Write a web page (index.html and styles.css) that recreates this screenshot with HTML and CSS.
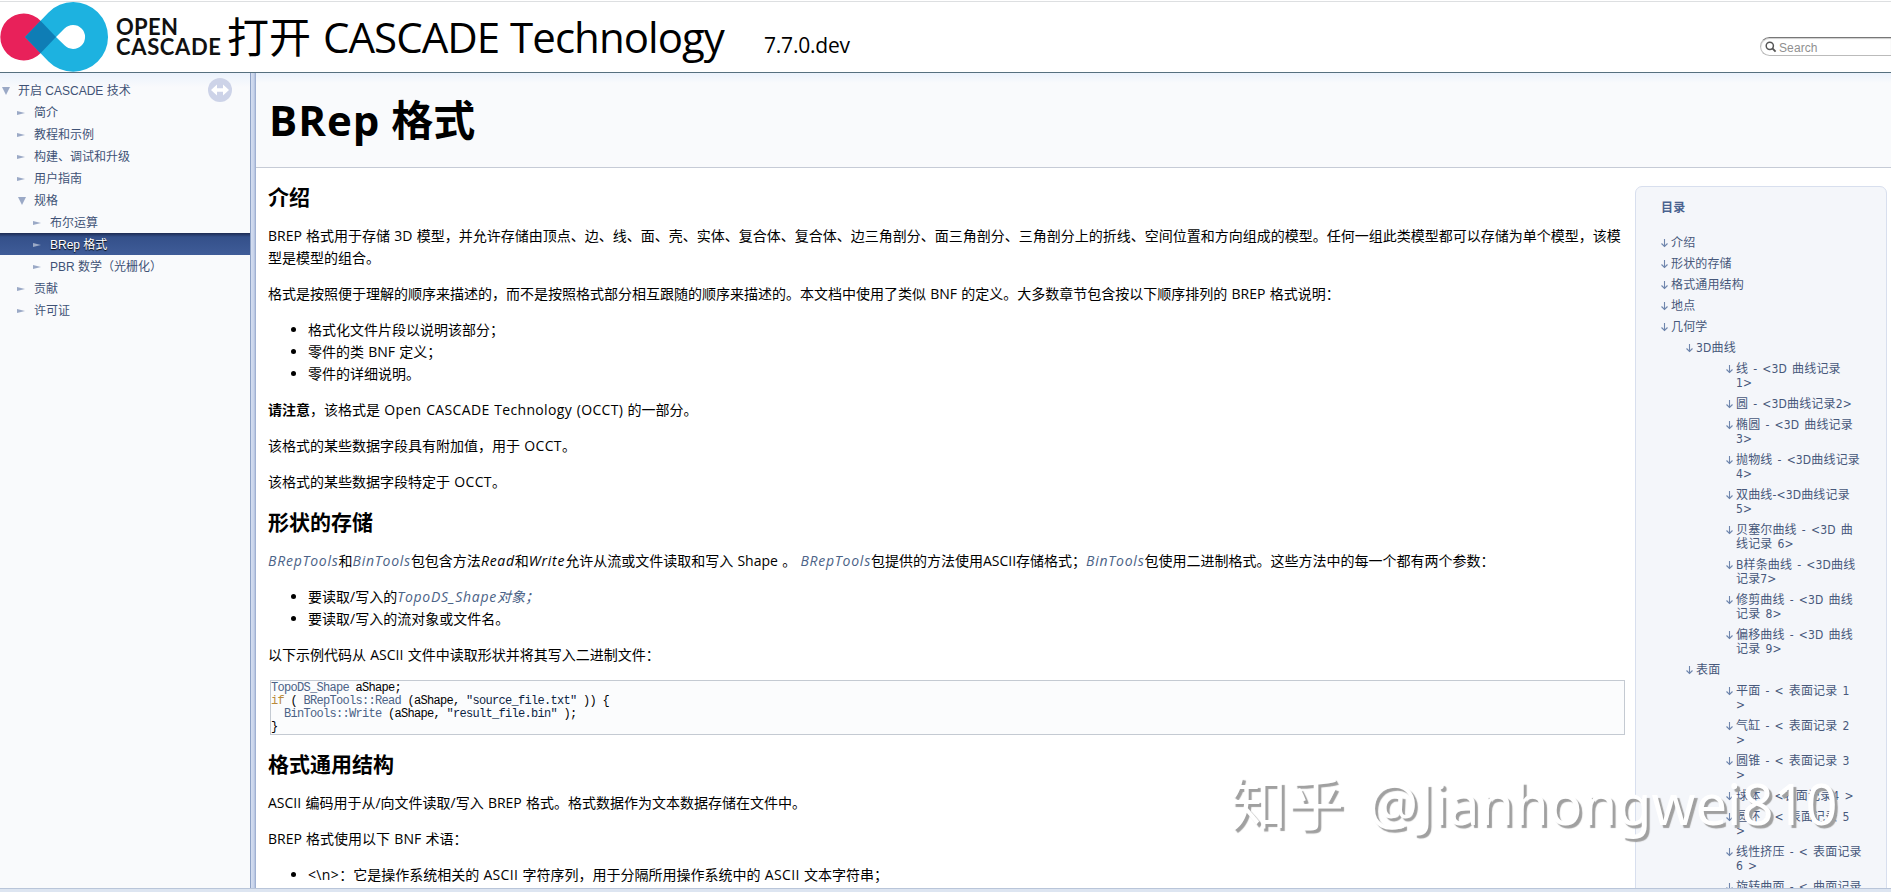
FILE: index.html
```html
<!DOCTYPE html>
<html lang="zh-CN">
<head>
<meta charset="UTF-8">
<title>Open CASCADE Technology: BRep 格式</title>
<link rel="stylesheet" href="styles.css">
</head>
<body>
<header id="top">
  <svg class="logo" width="222" height="72" viewBox="0 0 222 72">
    <path fill="#e8215a" d="M56 37 L40.5 53.3 A23.4 23.4 0 1 1 40.5 20.7 Z"/>
    <path fill="#1db2e0" fill-rule="evenodd" d="M25 37 L48.5 12.4 A34.8 34.8 0 1 1 48.5 61.4 Z M56 37 L64.5 45.3 A12 12 0 1 0 64.5 28.5 Z"/>
    <path fill="#0f7db5" d="M25 37 L40.5 20.7 L56 37 L40.5 53.3 Z"/>
    <text class="logo-text" x="116" y="34.5" textLength="62">OPEN</text>
    <text class="logo-text" x="116" y="55" textLength="105">CASCADE</text>
  </svg>
  <div class="project-name"><span class="cn">打开</span> <span class="en">CASCADE Technology</span></div>
  <div class="project-number">7.7.0.dev</div>
  <div class="search-box">
    <svg width="12" height="12" viewBox="0 0 12 12"><circle cx="4.8" cy="4.8" r="3.6" fill="none" stroke="#555" stroke-width="1.5"/><path d="M7.4 7.4L10.6 10.6" stroke="#555" stroke-width="1.9"/></svg>
    <span>Search</span>
  </div>
</header>

<div class="main">
  <nav id="nav-tree">
    <svg class="nav-sync" width="24" height="24" viewBox="0 0 24 24"><circle cx="12" cy="12" r="12" fill="#cdd3e8"/><path fill="#fff" d="M3 12L9 6.5V10.2H15V6.5L21 12L15 17.5V13.8H9V17.5Z"/></svg>
    <ul>
      <li class="open">开启 CASCADE 技术</li>
      <li class="l1">简介</li>
      <li class="l1">教程和示例</li>
      <li class="l1">构建、调试和升级</li>
      <li class="l1">用户指南</li>
      <li class="l1 open">规格</li>
      <li class="l2">布尔运算</li>
      <li class="l2 selected">BRep 格式</li>
      <li class="l2">PBR 数学（光栅化）</li>
      <li class="l1">贡献</li>
      <li class="l1">许可证</li>
    </ul>
  </nav>
  <div class="splitbar"></div>
  <div id="doc-content">
    <div class="header"><div class="title"><span>BRep</span> 格式</div></div>
    <div class="contents">
      <div class="textblock">
        <h1>介绍</h1>
        <p>BREP 格式用于存储 3D 模型，并允许存储由顶点、边、线、面、壳、实体、复合体、复合体、边三角剖分、面三角剖分、三角剖分上的折线、空间位置和方向组成的模型。任何一组此类模型都可以存储为单个模型，该模<br>型是模型的组合。</p>
        <p>格式是按照便于理解的顺序来描述的，而不是按照格式部分相互跟随的顺序来描述的。本文档中使用了类似 BNF 的定义。大多数章节包含按以下顺序排列的 BREP 格式说明：</p>
        <ul>
          <li>格式化文件片段以说明该部分；</li>
          <li>零件的类 BNF 定义；</li>
          <li>零件的详细说明。</li>
        </ul>
        <p><b>请注意</b>，该格式是 <span class="wide">Open CASCADE Technology (OCCT)</span> 的一部分。</p>
        <p>该格式的某些数据字段具有附加值，用于 <span class="wide">OCCT</span>。</p>
        <p>该格式的某些数据字段特定于 <span class="wide">OCCT</span>。</p>

        <h1>形状的存储</h1>
        <p><a><em>BRepTools</em></a>和<a><em>BinTools</em></a>包包含方法<em>Read</em>和<em>Write</em>允许从流或文件读取和写入 Shape 。 <a><em>BRepTools</em></a>包提供的方法使用ASCII存储格式；<a><em>BinTools</em></a>包使用二进制格式。这些方法中的每一个都有两个参数：</p>
        <ul>
          <li>要读取/写入的<a><em>TopoDS_Shape</em><i>对象；</i></a></li>
          <li>要读取/写入的流对象或文件名。</li>
        </ul>
        <p>以下示例代码从 ASCII 文件中读取形状并将其写入二进制文件：</p>
        <pre class="fragment"><a>TopoDS_Shape</a> aShape;
<span class="keyword">if</span> ( <a>BRepTools::Read</a> (aShape, <span class="string">"source_file.txt"</span> )) {
  <a>BinTools::Write</a> (aShape, <span class="string">"result_file.bin"</span> );
}</pre>

        <h1>格式通用结构</h1>
        <p>ASCII 编码用于从/向文件读取/写入 BREP 格式。格式数据作为文本数据存储在文件中。</p>
        <p>BREP 格式使用以下 BNF 术语：</p>
        <ul>
          <li><span class="wide">&lt;\n&gt;</span>：它是操作系统相关的 <span class="wide">ASCII</span> 字符序列，用于分隔所用操作系统中的 <span class="wide">ASCII</span> 文本字符串；</li>
        </ul>
      </div>

      <div class="toc">
        <h3>目录</h3>
        <ul>
          <li>介绍</li>
          <li>形状的存储</li>
          <li>格式通用结构</li>
          <li>地点</li>
          <li>几何学</li>
          <li class="level2">3D曲线</li>
          <li class="level3">线 - &lt;3D 曲线记录<br>1&gt;</li>
          <li class="level3">圆 - &lt;3D曲线记录2&gt;</li>
          <li class="level3">椭圆 - &lt;3D 曲线记录<br>3&gt;</li>
          <li class="level3">抛物线 - &lt;3D曲线记录<br>4&gt;</li>
          <li class="level3">双曲线-&lt;3D曲线记录<br>5&gt;</li>
          <li class="level3">贝塞尔曲线 - &lt;3D 曲<br>线记录 6&gt;</li>
          <li class="level3">B样条曲线 - &lt;3D曲线<br>记录7&gt;</li>
          <li class="level3">修剪曲线 - &lt;3D 曲线<br>记录 8&gt;</li>
          <li class="level3">偏移曲线 - &lt;3D 曲线<br>记录 9&gt;</li>
          <li class="level2">表面</li>
          <li class="level3">平面 - &lt; 表面记录 1<br>&gt;</li>
          <li class="level3">气缸 - &lt; 表面记录 2<br>&gt;</li>
          <li class="level3">圆锥 - &lt; 表面记录 3<br>&gt;</li>
          <li class="level3">球体 - &lt;表面记录4 &gt;</li>
          <li class="level3">圆环 - &lt; 表面记录 5<br>&gt;</li>
          <li class="level3">线性挤压 - &lt; 表面记录<br>6 &gt;</li>
          <li class="level3">旋转曲面 - &lt; 曲面记录</li>
        </ul>
      </div>
    </div>
  </div>
</div>
<footer></footer>
<div class="watermark">知乎 <span>@Jianhongwei810</span></div>
</body>
</html>
```
FILE: styles.css
```css
* {
  box-sizing: border-box;
}
body {
  margin: 0;
  width: 100vw;
  height: 100vh;
  overflow: hidden;
  display: flex;
  flex-direction: column;
  background: #fff;
  color: #000;
  font: 400 14px/22px "Open Sans", "Noto Sans CJK SC", sans-serif;
}
ul {
  margin: 0;
  padding: 0;
}

/* top area */
#top {
  flex: none;
  display: flex;
  height: 73px;
  border-bottom: 1px solid #56707f;
  background: linear-gradient(#fff 1px, #dddfe1 1px, #dddfe1 2px, #fff 2px);
}
.logo {
  flex: none;
}
.logo-text {
  font: 700 22px Lato, sans-serif;
  fill: #111;
}
.project-name {
  margin-left: 5px;
  font-size: 42px;
  line-height: 74px;
  white-space: nowrap;
  word-spacing: 1px;
}
.project-name .en {
  letter-spacing: -0.95px;
}
.project-number {
  margin-left: 40px;
  padding-top: 9px;
  font-size: 21px;
  line-height: 72px;
  letter-spacing: -0.2px;
}
.search-box {
  display: flex;
  align-items: center;
  margin: 37px 0 0 auto;
  width: 131px;
  height: 19px;
  padding-left: 4px;
  gap: 2px;
  border: 1px solid #bbb;
  border-top: 1px solid #777;
  border-right: none;
  border-radius: 10px 0 0 10px;
  box-shadow: inset 0 1px 1px #ccc;
  color: #909090;
  font: 12px "Liberation Sans", sans-serif;
}
.search-box span {
  padding-top: 2px;
  letter-spacing: 0.1px;
}

.main {
  flex: 1;
  min-height: 0;
  display: flex;
  overflow: hidden;
}

/* navigation tree */
#nav-tree {
  position: relative;
  flex: none;
  width: 250px;
  padding-top: 6px;
  background: linear-gradient(#ebf2fc, #f9fafc 14px);
  color: #3f5276;
  font: 12px/22px "Liberation Sans", "Noto Sans CJK SC", sans-serif;
}
#nav-tree li {
  display: flex;
  align-items: center;
  gap: 8px;
  height: 22px;
  padding: 2px 0 0 2px;
  white-space: nowrap;
}
#nav-tree li::before {
  content: "";
  width: 8px;
  height: 4px;
  background: #9ba9c6;
  clip-path: polygon(0 0, 100% 50%, 0 100%);
}
#nav-tree li.open::before {
  height: 8px;
  clip-path: polygon(0 0, 100% 0, 50% 100%);
}
#nav-tree li.l1 {
  padding-left: 17px;
  gap: 9px;
}
#nav-tree li.l1.open {
  padding-left: 18px;
  gap: 8px;
}
#nav-tree li.l2 {
  padding-left: 33px;
  gap: 9px;
}
#nav-tree li.selected {
  background: linear-gradient(#1d2b52, #34508a 4px, #3f5c98);
  color: #fff;
  text-shadow: 0 1px 1px #000;
}
.nav-sync {
  position: absolute;
  top: 5px;
  right: 18px;
}
.splitbar {
  flex: none;
  width: 6px;
  background: linear-gradient(90deg, #8ea2c6 1px, #d5def0 1px, #c6d2ea 4px, #93a5c9 6px);
}

/* document */
#doc-content {
  flex: 1;
  min-width: 0;
  overflow: hidden;
}
.header {
  height: 95px;
  padding: 15px 0 0 13px;
  background: linear-gradient(#ebf2fc, #f9fafc 10px);
  border-bottom: 1px solid #c6cbd6;
}
.title {
  font-size: 42px;
  line-height: 64px;
  font-weight: 700;
}
.title span {
  letter-spacing: 1px;
}
.contents {
  display: flex;
  padding: 15px 4px 0 12px;
}
.textblock {
  flex: 1;
  min-width: 0;
  word-spacing: 0.6px;
}
.textblock h1 {
  margin: 15px 0 14px;
  font-size: 21px;
  line-height: 28px;
}
.textblock h1:first-child {
  margin-top: 0;
}
.textblock p,
.textblock ul {
  margin: 0 0 14px;
  white-space: nowrap;
}
.textblock ul {
  padding-left: 40px;
}
a {
  color: #4b6387;
}
em {
  letter-spacing: 0.75px;
}
.wide {
  letter-spacing: 0.35px;
}
.fragment {
  margin: 0 10px 14px 2px;
  padding: 1px 0 0;
  height: 55px;
  border: 1px solid #c4cad2;
  background: #fbfcfd;
  font: 12px/13px "Liberation Mono", monospace;
  letter-spacing: -0.7px;
  word-spacing: 0;
}
.keyword {
  color: #b98a3a;
}
.string {
  color: #0c2444;
}

/* table of contents */
.toc {
  flex: none;
  width: 252px;
  height: 900px;
  margin-top: 3px;
  padding: 11px 0 0 25px;
  background: #f4f6fa;
  border: 1px solid #d8dfee;
  border-radius: 7px;
  color: #47587a;
  font: 12px/14px "DejaVu Sans Condensed", "Noto Sans CJK SC", sans-serif;
  letter-spacing: 0.15px;
  word-spacing: 1.5px;
  white-space: nowrap;
}
.toc h3 {
  margin: 3px 0 20px;
  font-size: 12px;
  line-height: 15px;
  color: #4a628f;
}
.toc li {
  list-style: none;
  padding: 0 0 0 10px;
  margin-bottom: 7px;
  background: no-repeat 0 3px / 8px 9px url("data:image/svg+xml,%3Csvg xmlns='http://www.w3.org/2000/svg' viewBox='0 0 8 9'%3E%3Cpath d='M3.5 0V8M.5 4.5L3.5 7.5L6.5 4.5' fill='none' stroke='%236f86ad' stroke-width='1.1'/%3E%3C/svg%3E");
}
.toc .level2 {
  margin-left: 25px;
}
.toc .level3 {
  margin-left: 65px;
}

footer {
  flex: none;
  height: 4px;
  background: #dde5f1;
  border-top: 1px solid #b9c5d9;
}

.watermark {
  position: absolute;
  left: 1230px;
  top: 765px;
  color: #fff;
  font: 57px/76px "Noto Sans", "Noto Sans CJK SC", sans-serif;
  text-shadow: 3px 3px 1px #a0a0a0;
  white-space: nowrap;
  word-spacing: 9px;
}
.watermark span {
  font-size: 56px;
}
```
